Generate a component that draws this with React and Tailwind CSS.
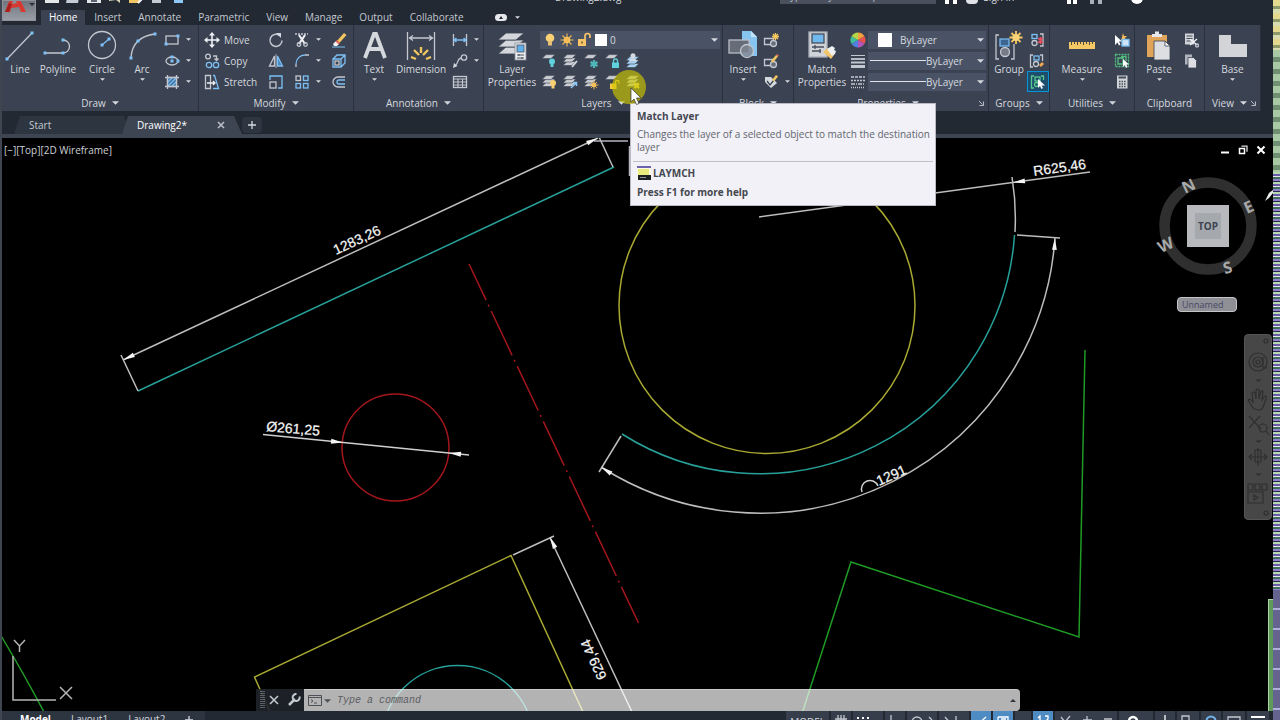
// src/App.jsx
import React, { useState } from 'react';

const MENU = ['Home', 'Insert', 'Annotate', 'Parametric', 'View', 'Manage', 'Output', 'Collaborate'];

/* ---------- icon helpers ---------- */

const Svg = ({ w = 16, h = 16, children }) => (
  <svg width={w} height={h} viewBox={`0 0 ${w} ${h}`} fill="none" stroke="#c3c8d0" strokeWidth="1.3" className="shrink-0" aria-hidden="true">
    {children}
  </svg>
);

const Caret = ({ big = false }) => (
  <svg width={big ? 7 : 5} height={big ? 4 : 3} viewBox="0 0 6 3" className="shrink-0" aria-hidden="true">
    <path d="M0 0h6L3 3z" fill="#d5d9df" />
  </svg>
);

const Node = ({ x, y }) => <rect x={x - 1.5} y={y - 1.5} width="3" height="3" fill="#7cc0f5" stroke="none" />;

const Launcher = () => (
  <svg width="6" height="6" viewBox="0 0 6 6" stroke="#b9bfc9" fill="none" aria-hidden="true">
    <path d="M1 1l3.5 3.5M5.5 1.5v4h-4" />
  </svg>
);

// Stack of sheets used by most of the layer tools
const Sheets = ({ n = 3, fill = '#c9ccd1' }) => (
  <g fill={fill} stroke="#3b4252" strokeWidth="0.6">
    {n > 2 && <path d="M1 12.5l4-4h9l-4 4z" />}
    {n > 1 && <path d="M1 9l4-4h9l-4 4z" />}
    <path d="M1 5.6l4-4h9l-4 4z" />
  </g>
);

/* ---------- large icons (32 x 32) ---------- */

const LineIcon = () => (
  <Svg w={32} h={32}><path d="M3 30L28 4" /><Node x={3} y={30} /><Node x={28} y={4} /></Svg>
);
const PolylineIcon = () => (
  <Svg w={32} h={32}><path d="M3 24h18a6.5 6.5 0 0 0 0-13" /><Node x={3} y={24} /><Node x={21} y={24} /><Node x={21} y={11} /></Svg>
);
const CircleIcon = () => (
  <Svg w={32} h={32}><circle cx="16" cy="16" r="13.5" /><path d="M16 16l7-6" stroke="#7cc0f5" /><Node x={16} y={16} /><Node x={23} y={10} /></Svg>
);
const ArcIcon = () => (
  <Svg w={32} h={32}><path d="M5 29Q6 8 29 5" /><Node x={5} y={29} /><Node x={12} y={12} /><Node x={29} y={5} /></Svg>
);
const TextIcon = () => (
  <Svg w={32} h={32}>
    <path d="M7 29L16 5h2l9 24M11 20h13" stroke="#d5d8dd" strokeWidth="3.8" />
  </Svg>
);
const DimensionIcon = () => (
  <Svg w={32} h={32}>
    <path d="M2.500 3v28M29.500 3v28" />
    <path d="M4 9h24M8 6.500L4.500 9 8 11.500M24 6.500L27.500 9 24 11.500" />
    <path d="M6 28l5 2M9 21l5 5M16 18v6M23 21l-5 5M26 28l-5 2" stroke="#f3c75f" strokeWidth="2.4" />
  </Svg>
);
const LayerPropsIcon = () => (
  <Svg w={32} h={32}>
    <g fill="#d3d6da" stroke="#3b4252" strokeWidth="0.8">
      <path d="M2 25l8-7h18l-8 7z" />
      <path d="M2 18l8-7h18l-8 7z" />
      <path d="M2 11l8-7h18l-8 7z" />
    </g>
    <rect x="19" y="14" width="11" height="17" fill="#eceef0" stroke="#8a909b" strokeWidth="0.8" />
    <rect x="21" y="16" width="7" height="7" fill="#5fb0e8" stroke="#4a5160" strokeWidth="0.8" />
    <path d="M21 26h7M21 29h7M23 25v2M26 28v2" stroke="#4a5160" strokeWidth="1" />
  </Svg>
);
const InsertIcon = () => (
  <Svg w={32} h={32}>
    <path d="M15 2h9l6 6v19H15z" fill="#86c5f0" stroke="none" />
    <path d="M24 2v6h6" fill="#c4e3f8" stroke="none" />
    <rect x="2" y="11" width="20" height="13" fill="#666d79" stroke="#b9bec7" />
    <circle cx="20" cy="22" r="6.500" fill="#808691" fillOpacity="0.8" stroke="#c3c8d0" />
  </Svg>
);
const MatchIcon = () => (
  <Svg w={32} h={32}>
    <rect x="3" y="3" width="18" height="25" fill="#d0d3d8" stroke="#aab0ba" />
    <rect x="6" y="5" width="12" height="9" fill="#6fb9ee" stroke="#474e5b" />
    <path d="M6 18h12M6 22h9M9 16v4M14 20v4" stroke="#474e5b" />
    <path d="M17 23l5-4 6 7-3 4z" fill="#f2c56b" stroke="none" />
    <path d="M21 20l5-3 3 2-1 2 2 1-1 3-3 2z" fill="#eef0f2" stroke="none" />
  </Svg>
);
const GroupIcon = () => (
  <Svg w={32} h={32}>
    <path d="M6 6H3v24h3M18 30h3V15" />
    <rect x="7" y="10" width="9" height="7" fill="#3c6592" stroke="#79b8ec" />
    <circle cx="12" cy="23" r="4.500" fill="#747b86" />
    <path d="M23 2v13M16.500 8.500h13M18.500 4l9 9M27.500 4l-9 9" stroke="#f6c95f" strokeWidth="1.800" />
    <circle cx="23" cy="8.500" r="3.600" fill="#f8d274" stroke="none" />
  </Svg>
);
const MeasureIcon = () => (
  <Svg w={32} h={32}>
    <rect x="3" y="13" width="26" height="7" fill="#f5c765" stroke="none" />
    <path d="M5.500 13v3M8.500 13v2M11.500 13v3M14.500 13v2M17.500 13v3M20.500 13v2M23.500 13v3M26.500 13v2" stroke="#4c4a40" strokeWidth="1" />
  </Svg>
);
const PasteIcon = () => (
  <Svg w={32} h={32}>
    <rect x="4" y="6" width="20" height="22" fill="#e0a55a" stroke="none" />
    <path d="M9 8V5h3V2.500h4V5h3v3z" fill="#e5e7ea" stroke="none" />
    <path d="M11 12h11l5 5v14H11z" fill="#dcdee1" stroke="#3b4252" strokeWidth="0.8" />
    <path d="M22 12v5h5z" fill="#fff" stroke="#3b4252" strokeWidth="0.8" />
  </Svg>
);
const BaseIcon = () => (
  <Svg w={32} h={32}><path d="M2 6h12v9h16v13H2z" fill="#d2d4d8" stroke="none" /></Svg>
);

/* ---------- small icons (16 x 16) ---------- */

const RectIcon = () => <Svg><rect x="2" y="4" width="12" height="8" /><Node x={2} y={12} /><Node x={14} y={4} /></Svg>;
const EllipseIcon = () => <Svg><ellipse cx="8" cy="8" rx="6" ry="4" /><Node x={8} y={8} /><Node x={14} y={8} /><Node x={8} y={4} /></Svg>;
const HatchIcon = () => (
  <Svg><rect x="3.500" y="3.500" width="9" height="9" fill="#3d6c98" /><path d="M4 8l4-4M4 12l8-8M8 12l4-4" stroke="#7cc0f5" /><path d="M1 3.500h14M1 12.500h14M3.500 1v14M12.500 1v14" /></Svg>
);
const MoveIcon = () => (
  <Svg><path d="M8 2v12M2 8h12" stroke="#eef0f3" strokeWidth="1.600" /><path d="M8 0l3 3.500H5zM8 16l3-3.500H5zM0 8l3.500-3v6zM16 8l-3.500-3v6z" fill="#eef0f3" stroke="none" /></Svg>
);
const CopyIcon = () => (
  <Svg><circle cx="4" cy="3.500" r="2.400" /><path d="M9 3h3.500v4M10.500 5.500l2 2 2-2" /><circle cx="5" cy="12" r="2.700" stroke="#7cc0f5" /><circle cx="12" cy="12" r="2.700" stroke="#7cc0f5" /></Svg>
);
const StretchIcon = () => (
  <Svg><path d="M1.500 1.500h5v13h-5z" /><path d="M9 1.500h1.500l4 13H9" stroke="#7cc0f5" /><path d="M3 9h8M9 7l2 2-2 2" stroke="#eef0f3" /></Svg>
);
const RotateIcon = () => <Svg><path d="M11.500 3.500A6 6 0 1 0 14 8.500" strokeWidth="1.500" /><path d="M8 1h5v5z" fill="#d5d9df" stroke="none" /></Svg>;
const MirrorIcon = () => <Svg><path d="M6.500 3v10H1.500z" /><path d="M9.500 3v10h5z" fill="#4c86b8" stroke="#7cc0f5" /><path d="M8 1v14" strokeWidth="0.8" /></Svg>;
const ScaleIcon = () => <Svg><path d="M2 6V2h12v12h-4" stroke="#7cc0f5" /><rect x="2" y="8" width="6" height="6" /></Svg>;
const TrimIcon = () => <Svg><path d="M1 2h13" strokeDasharray="2 1" /><path d="M5 3l6 9M11 3L5 12" stroke="#eef0f3" strokeWidth="2.200" /><circle cx="5" cy="12.500" r="1.800" /><circle cx="11.500" cy="12.500" r="1.800" /></Svg>;
const FilletIcon = () => <Svg><path d="M2 14v-3M11 2h4" /><path d="M2 11a9 9 0 0 1 9-9" stroke="#7cc0f5" /></Svg>;
const ArrayIcon = () => (
  <Svg><rect x="2" y="2" width="4.500" height="4.500" /><rect x="9.500" y="2" width="4.500" height="4.500" stroke="#7cc0f5" /><rect x="2" y="9.500" width="4.500" height="4.500" stroke="#7cc0f5" /><rect x="9.500" y="9.500" width="4.500" height="4.500" stroke="#7cc0f5" /></Svg>
);
const EraseIcon = () => <Svg><path d="M5 10l8-9 2.500 2-8 9z" fill="#f3c75f" stroke="none" /><path d="M2 12l3-3 3 3-2 2H3z" fill="#f4f4f4" stroke="none" /><path d="M4.500 9.500l1.500-1.500 3 2.500-1.500 1.700z" fill="#e36a5b" stroke="none" /><path d="M1 15h13" strokeWidth="1" stroke="#7cc0f5" /></Svg>;
const ExplodeIcon = () => <Svg><path d="M2 6h8v8H2zM2 6l4-4h8v8l-4 4M10 6l4-4" stroke="#7cc0f5" /><rect x="4" y="8" width="4" height="4" /></Svg>;
const OffsetIcon = () => <Svg><path d="M14 3H7a5 5 0 0 0 0 10h7" /><path d="M14 6H8a2 2 0 0 0 0 4h6" stroke="#7cc0f5" /></Svg>;
const LinearIcon = () => <Svg><path d="M1.500 2v12M14.500 2v12" /><path d="M2 8h12M4.500 6L2 8l2.500 2M11.500 6L14 8l-2.500 2" stroke="#7cc0f5" /></Svg>;
const LeaderIcon = () => <Svg><circle cx="12" cy="4.500" r="2.700" /><path d="M9.500 5C5 5 7 10 3 13" /><path d="M1 15l1-5 3.500 3z" fill="#d5d9df" stroke="none" /></Svg>;
const TableIcon = () => <Svg><rect x="1.500" y="2.500" width="13" height="11" /><path d="M1.500 5h13M1.500 8h13M1.500 11h13M6 5v8.500M10.500 5v8.500" strokeWidth="1.100" /></Svg>;

const BulbIcon = ({ color = '#f8cf72' }) => <Svg><circle cx="8" cy="6" r="4.300" fill={color} stroke="none" /><path d="M6 9h4v4.500H6z" fill="#e6bf74" stroke="none" /></Svg>;
const SunIcon = () => <Svg><circle cx="8" cy="8" r="3.300" fill="#f8cf72" stroke="none" /><path d="M8 1.500v13M1.500 8h13M3.500 3.500l9 9M12.500 3.500l-9 9" stroke="#f4b94f" strokeWidth="1.100" /></Svg>;
const UnlockIcon = () => <Svg><rect x="2" y="7" width="8" height="7" fill="#f7c565" stroke="none" /><path d="M9 7V4a2.500 2.500 0 0 1 5 0v2" stroke="#f7c565" strokeWidth="1.700" /><path d="M6 9.500v2" stroke="#4a4230" /></Svg>;

const LayerOff = () => <Svg><Sheets n={1} /><circle cx="11" cy="8.500" r="3" fill="#5fd0dc" stroke="none" /><path d="M9.500 11h3v3h-3z" fill="#5fd0dc" stroke="none" /></Svg>;
const LayerIso = () => <Svg><Sheets /><path d="M10 14l5-6" stroke="#d5d9df" strokeWidth="1.800" /></Svg>;
const LayerFreeze = () => <Svg><Sheets n={1} /><path d="M11 7v8M7.500 9l7 4M14.500 9l-7 4" stroke="#4fb7b9" strokeWidth="2.200" /></Svg>;
const LayerLock = () => <Svg><Sheets n={1} /><rect x="8" y="9.500" width="7" height="5.500" fill="#5fd0dc" stroke="none" /><path d="M9.500 10V8a2 2 0 0 1 4 0v2" stroke="#5fd0dc" /></Svg>;
const LayerCurrent = () => <Svg><g transform="translate(0 2)"><Sheets fill="#a9d3f2" /></g><circle cx="8" cy="2.800" r="2.500" fill="#d5d9df" stroke="none" /><path d="M3.500 8q4.500-5 9 0z" fill="#d5d9df" stroke="none" /></Svg>;
const LayerOn = () => <Svg><Sheets /><circle cx="12" cy="9" r="3" fill="#f8cf72" stroke="none" /><path d="M10.500 11h3v3.500h-3z" fill="#f8cf72" stroke="none" /></Svg>;
const LayerUniso = () => <Svg><Sheets /><path d="M9 14l5-5M11 8.500h3.500V12" stroke="#8ec9f5" strokeWidth="1.500" /></Svg>;
const LayerThaw = () => <Svg><Sheets /><circle cx="11" cy="11" r="2.300" fill="#f8cf72" stroke="none" /><path d="M11 6.500v9M6.500 11h9M8 8l6 6M14 8l-6 6" stroke="#f4b94f" strokeWidth="0.900" /></Svg>;
const LayerUnlock = () => <Svg><Sheets n={1} /><rect x="6" y="9.500" width="6.500" height="5.500" fill="#f7c940" stroke="none" /><path d="M11.500 10V8a1.700 1.700 0 0 1 3.400 0v1.500" stroke="#f7c940" /></Svg>;
const LayerMatch = () => <Svg><Sheets /><path d="M9 9l5 5M14 9.500L9.500 14" stroke="#f4e04a" strokeWidth="2" /></Svg>;

const BlockBase = () => <><path d="M1.500 6.500h9v6h-9z" /><circle cx="10.500" cy="11.500" r="3" fill="#676e7a" /></>;
const BlockCreate = () => <Svg><BlockBase /><path d="M12.500 1v7M9 4.500h7M10 2l5 5M15 2l-5 5" stroke="#f6c95f" strokeWidth="1.300" /></Svg>;
const BlockEdit = () => <Svg><BlockBase /><path d="M8 8l5-6 2 1.500-5 6z" fill="#f3c75f" stroke="none" /><path d="M13 2l1-1 2 1.500-1 1z" fill="#e36a5b" stroke="none" /></Svg>;
const AttrEdit = () => <Svg><path d="M2 3h6l6 6-6 5-6-6z" fill="#d5d9df" stroke="none" /><path d="M4 7l3 4 4-5" stroke="#3b4252" /><path d="M9 6l4-5 2 1.500-4 5z" fill="#f3c75f" stroke="none" /></Svg>;

const ColorWheel = () => (
  <Svg>
    <g stroke="none">
      <path d="M8 8V.5a7.500 7.500 0 0 1 6.500 3.800z" fill="#f0a03c" />
      <path d="M8 8l6.500-3.700a7.500 7.500 0 0 1 0 7.500z" fill="#e9534f" />
      <path d="M8 8l6.500 3.800A7.500 7.500 0 0 1 8 15.500z" fill="#b457b8" />
      <path d="M8 8v7.500a7.500 7.500 0 0 1-6.500-3.700z" fill="#4f7fe0" />
      <path d="M8 8l-6.500 3.800a7.500 7.500 0 0 1 0-7.500z" fill="#3fbf9a" />
      <path d="M8 8L1.500 4.300A7.500 7.500 0 0 1 8 .5z" fill="#b7d348" />
    </g>
  </Svg>
);
const WeightIcon = () => <Svg><path d="M1 2.500h14" strokeWidth="1" /><path d="M1 6h14" strokeWidth="1.800" /><path d="M1 9.500h14" strokeWidth="2" /><path d="M1 13.500h14" strokeWidth="3" /></Svg>;
const TypeIcon = () => <Svg><path d="M1 3h14" strokeDasharray="3 1" /><path d="M1 6.500h14" strokeDasharray="2 1" /><path d="M1 10h14" strokeDasharray="4 1 1 1" /><path d="M1 13.500h14" strokeDasharray="1 1" /></Svg>;

const Ungroup = () => <Svg><path d="M11 2h3v12h-3" /><rect x="3" y="2.500" width="5" height="4" stroke="#7cc0f5" /><circle cx="5.500" cy="11" r="2.500" /><path d="M9 6l5 5M14 6l-5 5M11.500 5v7" stroke="#e8505f" strokeWidth="1.500" /></Svg>;
const GroupEdit = () => <Svg><path d="M4 2H1.500v12H4M11 2h2.500v6" /><rect x="5" y="3" width="5" height="4" stroke="#7cc0f5" /><circle cx="7" cy="11" r="2.500" /><path d="M10 12l3-3 2 2-3 3z" fill="#f0a94f" stroke="none" /></Svg>;
const GroupSelect = () => <Svg><path d="M4 2H1.500v12H4M11 2h2.500v4" stroke="#59c98c" /><rect x="5" y="3" width="5" height="4" stroke="#59c98c" /><circle cx="6.500" cy="10.500" r="2" stroke="#59c98c" /><path d="M8 5v9l2-2 1.500 3 1.500-1-1.500-2.500H15z" fill="#fff" stroke="none" /></Svg>;
const QuickSelect = () => <Svg><path d="M9 1l1 3 3 0-2 2 1 3-3-2-2 2z" fill="#f3b65a" stroke="none" /><path d="M1 3v10l2.500-2.500 1.500 3 1.500-1L5 9.500h3z" fill="#fff" stroke="none" /><rect x="8" y="7.500" width="7" height="6.500" fill="#cfe4f6" stroke="#7cc0f5" /></Svg>;
const SelectAll = () => <Svg><rect x="1.500" y="1.500" width="13" height="12" stroke="#4fc07f" strokeDasharray="2 1" /><path d="M4 5h5v6H4zM7 3.500h5V8" stroke="#4fc07f" /><path d="M9 6v8l2-2 1 3 1.500-1-1-2.500H15z" fill="#fff" stroke="none" /></Svg>;
const CalcIcon = () => <Svg><rect x="3" y="1.500" width="10.500" height="13" fill="#d0d3d8" stroke="none" /><path d="M4.500 3.500h7.500" stroke="#454c59" strokeWidth="2" /><path d="M5 7.500h7M5 10h7M5 12.500h7" stroke="#454c59" strokeDasharray="1.500 1" strokeWidth="1.500" /></Svg>;
const CutIcon = () => <Svg><path d="M2 1.500h9v11H2z" fill="#d0d3d8" stroke="none" /><path d="M3.500 4h6M3.500 6.500h6M3.500 9h4" stroke="#454c59" strokeWidth="1" /><path d="M7 7l7 6M14 7l-7 6" stroke="#eef0f3" strokeWidth="1.400" /><circle cx="14" cy="13.500" r="1.500" /></Svg>;
const CopyClip = () => <Svg><path d="M2 1.500h7v10H2z" fill="#aeb3bb" stroke="none" /><path d="M5 4.500h5.500l3 3v7.500H5z" fill="#dcdee1" stroke="#3b4252" strokeWidth="0.800" /></Svg>;

/* ---------- ribbon building blocks ---------- */

const BigButton = ({ icon: Icon, label, caret, className = '' }) => (
  <button className={`flex flex-col items-center ${className}`}>
    <Icon />
    <span className="mt-0.5 whitespace-pre-line text-center leading-[13px]">{label}</span>
    {caret && <span className="mt-0.5"><Caret /></span>}
  </button>
);

const SmallButton = ({ icon: Icon, name, caret, label, active }) => (
  <button
    aria-label={name}
    className={`flex h-[21px] items-center ${active ? '-mx-0.5 border border-sky-500/80 bg-sky-800/50 px-0.5' : ''}`}
  >
    <Icon />
    {label && <span className="ml-1">{label}</span>}
    {caret && <span className="ml-1.5"><Caret /></span>}
  </button>
);

const SmallColumn = ({ items, className = '' }) => (
  <div className={`flex flex-col items-start ${className}`}>
    {items.map((it) => <SmallButton key={it.name} {...it} />)}
  </div>
);

const Panel = ({ title, caret = true, launcher, className = '', children }) => (
  <section className={`flex shrink-0 flex-col border-r border-[#2a313d] bg-[#3b4252] ${className}`}>
    <div className="flex flex-1 items-start pt-1">{children}</div>
    <div className="flex h-[17px] items-center px-1">
      <div className="flex flex-1 items-center justify-center gap-1.5">
        <span>{title}</span>
        {caret && <Caret big />}
      </div>
      {launcher && <Launcher />}
    </div>
  </section>
);

const LineCombo = ({ name }) => (
  <label className="flex h-[18px] w-full items-center bg-[#4a5366] px-0.5">
    <span className="h-px w-14 bg-[#e2e5ea]" />
    <select aria-label={name} className="min-w-0 flex-1 appearance-none outline-none">
      <option>ByLayer</option>
    </select>
    <Caret big />
  </label>
);

const Ribbon = () => (
  <div className="flex h-[86px] shrink-0 overflow-hidden">
    <Panel title="Draw" className="w-[197px]">
      <BigButton icon={LineIcon} label="Line" className="w-9" />
      <BigButton icon={PolylineIcon} label="Polyline" className="w-10" />
      <BigButton icon={CircleIcon} label="Circle" caret className="w-12" />
      <BigButton icon={ArcIcon} label="Arc" caret className="w-8" />
      <SmallColumn
        className="ml-1.5"
        items={[
          { icon: RectIcon, name: 'Rectangle', caret: true },
          { icon: EllipseIcon, name: 'Ellipse', caret: true },
          { icon: HatchIcon, name: 'Hatch', caret: true },
        ]}
      />
    </Panel>

    <Panel title="Modify" className="w-[155px]">
      <SmallColumn
        className="ml-[5px] w-16"
        items={[
          { icon: MoveIcon, name: 'Move', label: 'Move' },
          { icon: CopyIcon, name: 'Copy', label: 'Copy' },
          { icon: StretchIcon, name: 'Stretch', label: 'Stretch' },
        ]}
      />
      <SmallColumn
        items={[
          { icon: RotateIcon, name: 'Rotate' },
          { icon: MirrorIcon, name: 'Mirror' },
          { icon: ScaleIcon, name: 'Scale' },
        ]}
      />
      <SmallColumn
        className="ml-2.5"
        items={[
          { icon: TrimIcon, name: 'Trim', caret: true },
          { icon: FilletIcon, name: 'Fillet', caret: true },
          { icon: ArrayIcon, name: 'Array', caret: true },
        ]}
      />
      <SmallColumn
        className="ml-2.5"
        items={[
          { icon: EraseIcon, name: 'Erase' },
          { icon: ExplodeIcon, name: 'Explode' },
          { icon: OffsetIcon, name: 'Offset' },
        ]}
      />
    </Panel>

    <Panel title="Annotation" className="w-[130px]">
      <BigButton icon={TextIcon} label="Text" caret className="w-10" />
      <BigButton icon={DimensionIcon} label="Dimension" className="w-[54px]" />
      <SmallColumn
        className="ml-1"
        items={[
          { icon: LinearIcon, name: 'Linear', caret: true },
          { icon: LeaderIcon, name: 'Leader', caret: true },
          { icon: TableIcon, name: 'Table' },
        ]}
      />
    </Panel>

    <Panel title="Layers" className="w-[239px]">
      <BigButton icon={LayerPropsIcon} label={'Layer\nProperties'} className="w-14" />
      <div className="flex flex-1 flex-col pr-0.5">
        <div className="flex h-[21px] items-center">
          <label className="flex h-[18px] w-full items-center gap-px bg-[#4a5366] px-0.5">
            <BulbIcon />
            <SunIcon />
            <UnlockIcon />
            <span className="mx-0.5 size-3 bg-white" />
            <select aria-label="Layer" className="min-w-0 flex-1 appearance-none outline-none">
              <option>0</option>
            </select>
            <Caret big />
          </label>
        </div>
        <div className="flex h-[21px] items-center gap-[5px] pl-px">
          <LayerOff /><LayerIso /><LayerFreeze /><LayerLock /><LayerCurrent />
        </div>
        <div className="flex h-[21px] items-center gap-[5px] pl-px">
          <LayerOn /><LayerUniso /><LayerThaw /><LayerUnlock /><LayerMatch />
        </div>
      </div>
    </Panel>

    <Panel title="Block" className="w-[71px]">
      <BigButton icon={InsertIcon} label="Insert" caret className="w-10" />
      <SmallColumn
        items={[
          { icon: BlockCreate, name: 'Create block' },
          { icon: BlockEdit, name: 'Edit block' },
          { icon: AttrEdit, name: 'Edit attributes', caret: true },
        ]}
      />
    </Panel>

    <Panel title="Properties" launcher className="w-[195px]">
      <BigButton icon={MatchIcon} label={'Match\nProperties'} className="w-14" />
      <SmallColumn
        items={[
          { icon: ColorWheel, name: 'Object color' },
          { icon: WeightIcon, name: 'Lineweight' },
          { icon: TypeIcon, name: 'Linetype' },
        ]}
      />
      <div className="ml-0.5 flex flex-1 flex-col pr-0.5">
        <div className="flex h-[21px] items-center">
          <label className="flex h-[18px] w-full items-center bg-[#4a5366] pl-2.5 pr-0.5">
            <span className="mr-2 size-3.5 bg-white" />
            <select aria-label="Color" className="min-w-0 flex-1 appearance-none outline-none">
              <option>ByLayer</option>
            </select>
            <Caret big />
          </label>
        </div>
        <div className="flex h-[21px] items-center"><LineCombo name="Lineweight value" /></div>
        <div className="flex h-[21px] items-center"><LineCombo name="Linetype value" /></div>
      </div>
    </Panel>

    <Panel title="Groups" className="w-[61px]">
      <BigButton icon={GroupIcon} label="Group" className="w-10" />
      <SmallColumn
        items={[
          { icon: Ungroup, name: 'Ungroup' },
          { icon: GroupEdit, name: 'Group edit' },
          { icon: GroupSelect, name: 'Group selection', active: true },
        ]}
      />
    </Panel>

    <Panel title="Utilities" className="w-[85px]">
      <BigButton icon={MeasureIcon} label="Measure" caret className="w-16" />
      <SmallColumn
        items={[
          { icon: QuickSelect, name: 'Quick select' },
          { icon: SelectAll, name: 'Select all' },
          { icon: CalcIcon, name: 'Calculator' },
        ]}
      />
    </Panel>

    <Panel title="Clipboard" caret={false} className="w-[70px]">
      <BigButton icon={PasteIcon} label="Paste" caret className="w-12" />
      <SmallColumn items={[{ icon: CutIcon, name: 'Cut' }, { icon: CopyClip, name: 'Copy clip' }]} />
    </Panel>

    <Panel title="View" launcher className="w-14">
      <BigButton icon={BaseIcon} label="Base" caret className="w-14" />
    </Panel>
  </div>
);

/* ---------- title bar and menu ---------- */

const Header = ({ tab, onTab }) => (
  <header className="flex shrink-0">
    <button aria-label="Application menu" className="flex h-[21px] w-[34px] overflow-hidden border border-[#8d929b] bg-linear-to-b from-[#6f747d] to-[#9a9ea6]">
      <svg width="32" height="20" viewBox="0 0 32 20" aria-hidden="true">
        <path d="M2 11L9-8h5l9 19h-5l-2-5-8 1-1 4z" fill="#d63a32" />
        <path d="M9 3l2-6 3 5z" fill="#8a8f98" />
        <path d="M2 11l4-9 3 1-3 8z" fill="#a81f1f" />
        <path d="M26 2h6l-3 3z" fill="#2b303a" />
      </svg>
    </button>
    <div className="flex min-w-0 flex-1 flex-col">
      <div className="flex h-2.5 items-end gap-[5px] overflow-hidden pb-1.5 pl-2">
        <Svg><path d="M1 2h14v13H1z" fill="#e4e7ea" stroke="none" /></Svg>
        <Svg><path d="M3 4h12l-2 11H1z" fill="#c6ccd3" stroke="none" /></Svg>
        <Svg><path d="M1 2h14v13H1z" fill="#e4e7ea" stroke="none" /><path d="M5 10h6v4H5z" fill="#5c6472" stroke="none" /></Svg>
        <Svg><path d="M2 2h11v13l-4-3-7 1z" fill="#d5d2b8" stroke="none" /></Svg>
        <Svg><path d="M1 4h12l-2 11H1z" fill="#f0c564" stroke="none" /><path d="M10 15l5-5" stroke="#fff" strokeWidth="2" /></Svg>
        <Svg><path d="M3 2h9v13H3z" fill="#c6ccd3" stroke="none" /></Svg>
        <Svg><path d="M1 3h14v8H1zM4 12h9v3H4z" fill="#8ec9f5" stroke="none" /></Svg>
        <span className="ml-[364px] leading-[14px]">Drawing2.dwg</span>
        <input aria-label="Search" placeholder="Type a keyword or phrase" className="ml-[154px] h-[18px] w-[156px] bg-[#4a505e] px-1 placeholder:text-[#b9bfc9]" />
        <span className="ml-1 h-4 w-3 border-x-4 border-white" />
        <span className="ml-1 h-4 w-3 rounded bg-[#dfe2e6]" />
        <span className="leading-[14px]">Sign In</span>
        <span className="ml-12 h-4 w-2.5 border-x-4 border-white" />
        <span className="ml-2 h-4 w-3 border-x-4 border-[#aab0ba]" />
        <span className="ml-6 size-3 rounded-full bg-white" />
      </div>
      <nav className="flex h-[15px] items-center gap-px pl-[5px]">
        {MENU.map((m) => (
          <button
            key={m}
            onClick={() => onTab(m)}
            className={`flex h-full items-start px-2 ${m === tab ? 'bg-[#3b4252] text-white' : 'text-[#c3c8d0]'}`}
          >
            {m}
          </button>
        ))}
        <button aria-label="Minimize ribbon" className="ml-[22px] flex items-center gap-2">
          <span className="flex h-[7px] w-3 items-center justify-center rounded-sm bg-[#e6e8ec]">
            <svg width="4" height="3" viewBox="0 0 4 3"><path d="M0 3h4L2 0z" fill="#222933" /></svg>
          </span>
          <Caret />
        </button>
      </nav>
    </div>
  </header>
);

const DocTabs = () => (
  <div className="flex h-[27px] shrink-0 items-end border-b-4 border-[#3d4553] pl-3">
    <button className="h-[18px] w-[116px] bg-[#2d3541] pl-[15px] text-left text-[#c3c8d0] [clip-path:polygon(6px_0,110px_0,100%_100%,0_100%)]">
      Start
    </button>
    <div className="-ml-2 flex h-[18px] w-[120px] items-center bg-[#3d4553] pl-[15px] pr-3.5 [clip-path:polygon(6px_0,112px_0,100%_100%,0_100%)]">
      <button className="flex-1 text-left text-white">Drawing2*</button>
      <button aria-label="Close drawing" className="mr-[3px]">
        <Svg w={8} h={8}><path d="M1 1l6 6M7 1L1 7" stroke="#b9bfc9" strokeWidth="1.600" /></Svg>
      </button>
    </div>
    <button aria-label="New drawing" className="mb-px flex h-4 w-5 items-center justify-center rounded bg-[#2d3541]">
      <Svg w={8} h={8}><path d="M4 0v8M0 4h8" stroke="#d5d9df" /></Svg>
    </button>
  </div>
);

/* ---------- model space ---------- */

// Arrow head whose tip sits at x,y; deg is the direction it points to
const Head = ({ x, y, deg }) => (
  <path d="M0 0L-12-2.400v4.800z" fill="#f4f4f4" stroke="none" transform={`translate(${x} ${y}) rotate(${deg})`} />
);

const DimText = ({ x, y, deg, children }) => (
  <text transform={`translate(${x} ${y}) rotate(${deg})`} fontSize="14" fill="#f4f4f4" stroke="#f4f4f4" strokeWidth="0.250" fontFamily='"Liberation Sans", Arial, sans-serif'>
    {children}
  </text>
);

const Drawing = () => (
  <svg className="absolute inset-0 h-full w-full" fill="none" strokeWidth="1.500" role="img" aria-label="Model space">
    <g transform="translate(-2 -138)">
      {/* aligned dimension */}
      <path d="M138 391L614 167" stroke="#27a09a" />
      <path d="M123 360L598 138M121 355l17 36M599 137l14 30" stroke="#bdbdbd" />
      <path d="M594 141h34M629.500 146v30" stroke="#b5b5c4" />
      <Head x={123} y={360} deg={155} />
      <Head x={598} y={138} deg={-25} />
      <DimText x={336} y={255} deg={-25}>1283,26</DimText>

      {/* diameter */}
      <circle cx="395.500" cy="447.500" r="53.500" stroke="#a3161c" />
      <path d="M263 434.500L469 455" stroke="#cfcfcf" />
      <Head x={343} y={442.500} deg={6} />
      <Head x={449} y={453} deg={186} />
      <DimText x={266} y={431} deg={5}>Ø261,25</DimText>

      {/* centre line */}
      <path d="M469 264L638.500 623" stroke="#a3161c" strokeDasharray="49 5 2 5" strokeDashoffset="9" />

      {/* arcs and radius */}
      <circle cx="767" cy="305.500" r="148" stroke="#a8a832" />
      <path d="M1014.500 235A256 256 0 0 1 622 434" stroke="#27a09a" />
      <path d="M1012 177A256 256 0 0 1 1015 232M759 217L1090 172" stroke="#bdbdbd" />
      <path d="M1017 235l43 3M621 436l-22 36M1055 238A296 296 0 0 1 601 467" stroke="#bdbdbd" />
      <Head x={1013} y={182.500} deg={172} />
      <Head x={1055} y={238} deg={-87} />
      <Head x={601} y={467} deg={213} />
      <DimText x={1034} y={176} deg={-8}>R625,46</DimText>
      <DimText x={879} y={486} deg={-24}>1291</DimText>
      <path d="M862 492a8.500 8.500 0 1 1 16-6" stroke="#cfcfcf" />

      {/* rectangle with inscribed circle */}
      <path d="M270 712L254.500 677 511 555.500 583 712" stroke="#a8a832" />
      <circle cx="457.500" cy="741.500" r="76" stroke="#27a09a" />
      <path d="M513 555l41-19M550 538l82 174" stroke="#bdbdbd" />
      <Head x={550} y={537} deg={-115} />
      <DimText x={607} y={677} deg={-115}>629,44</DimText>

      {/* polylines */}
      <path d="M1085 350L1079 637 851 562 802.500 712" stroke="#1f9a25" />
      <path d="M0 634Q24 674 44 712" stroke="#1f9a25" />

      {/* UCS icon */}
      <path d="M13 656v44h43M60 687l12 12M72 687l-12 12M14 640l5.500 6 5.500-6M19.500 646v6" stroke="#b5b5b5" />
    </g>
  </svg>
);

const ViewCube = () => (
  <svg width="110" height="110" viewBox="0 0 110 110" className="absolute right-2.5 top-[33px]" role="img" aria-label="View cube">
    <circle cx="55" cy="55" r="43.500" fill="none" stroke="#2f2f2f" strokeWidth="10.500" />
    <rect x="34" y="34" width="42" height="42" fill="#b7b9bc" />
    <rect x="42" y="42" width="26" height="26" fill="#a5a9ae" />
    <g fontFamily='"Open Sans", sans-serif' fontWeight="700" textAnchor="middle">
      <text x="55" y="59" fontSize="10" fill="#3d434e">TOP</text>
      <g fontSize="16" fill="#a9a9a9">
        <text transform="translate(38 20) rotate(-25)">N</text>
        <text transform="translate(98 41) rotate(-25)">E</text>
        <text transform="translate(15 79) rotate(-25)">W</text>
        <text transform="translate(76 102) rotate(-15)">S</text>
      </g>
    </g>
  </svg>
);

const NavBar = () => (
  <div className="absolute right-px top-[196px] flex h-[186px] w-7 items-center justify-center rounded-sm border border-[#555] bg-[#474747]">
    <svg width="24" height="180" viewBox="0 0 24 180" fill="none" stroke="#2f2f2f" strokeWidth="1.200" aria-label="Navigation">
      <circle cx="20" cy="4" r="2" />
      <circle cx="12" cy="25" r="9" /><circle cx="12" cy="25" r="5" /><circle cx="12" cy="25" r="2" /><path d="M17 20v11h4" />
      <path d="M11 43h3l-1.500 1z" />
      <path d="M8 72q-4-5-6-9 2-2 5 2l-1-9q2-2 3 0l1 6V53q2-2 3 0v9l2-8q2-1 2 1l-1 8 3-4q2 0 1 3l-3 8q-1 3-4 3z" />
      <path d="M3 79l12 13M14 79L3 91" /><circle cx="17" cy="91" r="4" /><path d="M20 94l3 4" />
      <path d="M11 104h3l-1.500 1z" />
      <path d="M3 120h18M12 111v18M6 117l-3 3 3 3M18 117l3 3-3 3M9 113h6v12H9z" />
      <path d="M11 137h3l-1.500 1z" />
      <path d="M2 147h5v6H2zM9 147h5v6H9zM16 147h5v6h-5zM2 155h15v11H2zM8 158v5l4-2.500z" />
      <circle cx="20" cy="176" r="2" />
    </svg>
  </div>
);

const CommandLine = () => (
  <form className="absolute bottom-0 left-[254px] right-[253px] flex h-[22px]" onSubmit={(e) => e.preventDefault()}>
    <div className="flex w-12 items-center gap-1 bg-[#20232b]/90 pl-1">
      <svg width="5" height="18" viewBox="0 0 5 18" stroke="#9a9ea6" strokeDasharray="1 1"><path d="M1 0v18M3 0v18M5 0v18" /></svg>
      <button type="button" aria-label="Close command line"><Svg w={10} h={10}><path d="M1 1l8 8M9 1L1 9" strokeWidth="1.600" /></Svg></button>
      <button type="button" aria-label="Customize" className="ml-1">
        <Svg w={14} h={14}><path d="M2 12l6-6" strokeWidth="2.500" /><path d="M12.500 3.500A3.500 3.500 0 1 1 9.500 1" strokeWidth="2" /></Svg>
      </button>
    </div>
    <div className="flex flex-1 items-center rounded-r-sm border-t border-white/30 bg-white/70 px-1">
      <svg width="14" height="11" viewBox="0 0 14 11" fill="none" stroke="#4e5157"><path d="M.5.5h13v10H.5zM.5 2.500h13M3 4.500l2 1.500-2 1.500M6 8h3" /></svg>
      <svg width="7" height="4" viewBox="0 0 6 3" className="ml-0.5"><path d="M0 0h6L3 3z" fill="#4e5157" /></svg>
      <input
        aria-label="Command"
        placeholder="Type a command"
        className="ml-1.5 min-w-0 flex-1 bg-transparent font-['Liberation_Mono',monospace] text-[10px] italic text-[#33363c] outline-none placeholder:text-[#5c5e63]"
      />
      <svg width="6" height="3" viewBox="0 0 6 3"><path d="M0 3h6L3 0z" fill="#33363c" /></svg>
    </div>
  </form>
);

const ModelSpace = () => (
  <main className="relative min-h-0 flex-1 overflow-hidden bg-black">
    <Drawing />
    <div className="absolute inset-x-0 top-0 flex items-center justify-between pl-0.5 pr-[7px] pt-[5px] text-[#cfd2d6]">
      <span>[−][Top][2D Wireframe]</span>
      <div className="flex gap-2">
        <button aria-label="Minimize"><Svg w={10} h={10}><path d="M1 7.500h8" stroke="#fff" strokeWidth="2" /></Svg></button>
        <button aria-label="Restore"><Svg w={10} h={10}><path d="M1.500 3.500h5v5h-5z" stroke="#fff" strokeWidth="1.500" /><path d="M3.500 1.200h5.500v5.500" stroke="#ddd" /></Svg></button>
        <button aria-label="Close"><Svg w={10} h={10}><path d="M1.500 1.500l7 7M8.500 1.500l-7 7" stroke="#fff" strokeWidth="2" /></Svg></button>
      </div>
    </div>
    <ViewCube />
    <button className="absolute right-9 top-[159px] h-[15px] w-[60px] rounded-sm border border-[#c4c4c8] bg-[#8f9096] pl-1 text-left text-[9px] leading-3 text-[#474766]">
      Unnamed
    </button>
    <NavBar />
    <svg width="8" height="12" viewBox="0 0 8 12" className="absolute right-0 top-[52px]"><path d="M0 11l4-8 4-3v3l-4 5z" fill="#e8ece8" /></svg>
    <div className="absolute bottom-0 right-0 h-28 w-[5px] border-l border-t border-[#a9d6a0] bg-[#5f9a5a]" />
    <CommandLine />
  </main>
);

const StatusCell = ({ on, children }) => (
  <span className={`flex h-4 min-w-4 items-start justify-center px-1 pt-1 ${on ? 'bg-[#4f8cc4] text-white' : 'bg-[#363d4b]'}`}>
    {children}
  </span>
);

const StatusBar = () => (
  <footer className="flex h-[9px] shrink-0 items-start justify-between overflow-hidden bg-[#222933]">
    <div className="flex items-start bg-[#2d3541] pt-px">
      <button className="pl-[18px] pr-5 font-bold text-white">Model</button>
      <button className="pr-5">Layout1</button>
      <button className="pr-5">Layout2</button>
      <button aria-label="New layout" className="pr-3 pt-1"><Svg w={8} h={8}><path d="M4 0v8M0 4h8" stroke="#d5d9df" /></Svg></button>
    </div>
    <div className="flex gap-0.5 pr-1">
      <StatusCell>MODEL</StatusCell>
      <StatusCell><Svg w={12} h={12}><path d="M3 0v12M6 0v12M9 0v12M0 4h12M0 8h12" /></Svg></StatusCell>
      <StatusCell><Svg w={22} h={12}><path d="M0 3h14M0 6h14" stroke="#fff" strokeWidth="2" strokeDasharray="2 3" /></Svg></StatusCell>
      <StatusCell><Svg w={12} h={12}><path d="M2 0v10h9" /></Svg></StatusCell>
      <StatusCell><Svg w={22} h={12}><circle cx="6" cy="7" r="5" /><path d="M18 2l3 3z" /></Svg></StatusCell>
      <StatusCell><Svg w={22} h={12}><path d="M2 2l7 8M13 1v10" /></Svg></StatusCell>
      <StatusCell on><Svg w={12} h={12}><path d="M1 11l10-9" stroke="#fff" /></Svg></StatusCell>
      <StatusCell on><Svg w={12} h={12}><path d="M1 2h10v9M1 2v8M4 4h5" stroke="#fff" /></Svg></StatusCell>
      <StatusCell />
      <StatusCell on><Svg w={12} h={12}><path d="M3 11V1L1 3M6 11V6M8 1h3v3L8 7" stroke="#fff" /></Svg></StatusCell>
      <StatusCell><Svg w={54} h={12}><path d="M2 2l4 5 5-6M28 1v9M24 5h9M45 4h8" /></Svg></StatusCell>
      <StatusCell><Svg w={26} h={12}><circle cx="10" cy="6" r="4" stroke="#fff" strokeWidth="2.500" /></Svg></StatusCell>
      <StatusCell><Svg w={12} h={12}><path d="M6 0v12M1 6h10" stroke="#fff" /></Svg></StatusCell>
      <StatusCell><Svg w={14} h={12}><path d="M1 1h7v9H1zM11 5v5" /></Svg></StatusCell>
      <StatusCell><Svg w={12} h={12}><circle cx="6" cy="6" r="4.500" stroke="#6fb4ea" strokeWidth="2" /></Svg></StatusCell>
      <StatusCell><Svg w={14} h={12}><path d="M1 2h12v8H1z" /></Svg></StatusCell>
      <StatusCell><Svg w={14} h={12}><path d="M0 2h14M0 6h14" stroke="#fff" strokeWidth="2" /></Svg></StatusCell>
    </div>
  </footer>
);

/* ---------- overlays ---------- */

const MatchLayerTip = () => (
  <div role="tooltip" className="absolute left-[630px] top-[103px] w-[306px] border border-[#b9bac4] bg-[#f1f1f7] px-1.5 pb-1.5 pt-1.5 leading-[13px] text-[#62656e]">
    <p className="font-bold text-[#44474f]">Match Layer</p>
    <p className="mt-[5px] whitespace-nowrap">Changes the layer of a selected object to match the destination<br />layer</p>
    <hr className="-mx-1 mt-[7px] border-[#bfc0c6]" />
    <p className="mt-1 flex items-center gap-0.5 font-bold text-[#44474f]">
      <svg width="14" height="14" viewBox="0 0 14 14" aria-hidden="true">
        <rect width="14" height="14" fill="#fafae6" />
        <rect width="14" height="2" fill="#6b62b0" />
        <rect x="1" y="3" width="11" height="6" fill="#e9ec7c" />
        <rect x="1" y="9" width="13" height="5" fill="#1d1f22" />
        <path d="M3 11.500h6" stroke="#8f9399" />
      </svg>
      LAYMCH
    </p>
    <p className="mt-1.5 font-bold text-[#44474f]">Press F1 for more help</p>
  </div>
);

const Pointer = () => (
  <svg width="36" height="36" viewBox="0 0 36 36" className="pointer-events-none absolute left-[611px] top-[70px]" aria-hidden="true">
    <circle cx="18" cy="17" r="17" fill="#cfc800" fillOpacity="0.650" />
    <path d="M20 18v14l3-3 2.500 5.500 2.500-1-2.500-5.500h4.500z" fill="#fff" stroke="#333" strokeWidth="0.700" />
  </svg>
);

const App = () => {
  const [tab, setTab] = useState('Home');

  return (
    <div className="relative flex h-screen overflow-hidden bg-[#222933] font-['Open_Sans',sans-serif] text-[10px] leading-[14px] text-[#d5d9df]">
      <div className="flex min-w-0 flex-1 flex-col border-l-2 border-[#3f4652]">
        <Header tab={tab} onTab={setTab} />
        <Ribbon />
        <DocTabs />
        <ModelSpace />
        <StatusBar />
      </div>

      {/* slice of the window behind */}
      <div className="flex w-[7px] shrink-0 flex-col">
        <div className="h-[50px] bg-[repeating-linear-gradient(#e3d98f_0_6px,#8f9a6a_6px_9px,#d9dcae_9px_13px)]" />
        <div className="h-[122px] bg-[repeating-linear-gradient(#a9c9a4_0_7px,#6f8f72_7px_12px)]" />
        <div className="flex-1 bg-[repeating-linear-gradient(#b5d8b0_0_2px,#6a5aa8_2px_4px,#e4e6ea_4px_5px,#3f6f5a_5px_7px,#8f7fd0_7px_9px,#2a2a44_9px_10px)]" />
        <div className="h-[130px] bg-[repeating-linear-gradient(#64648f_0_18px,#b0b0dc_18px_20px)]" />
      </div>

      <MatchLayerTip />
      <Pointer />
    </div>
  );
};

export default App;
